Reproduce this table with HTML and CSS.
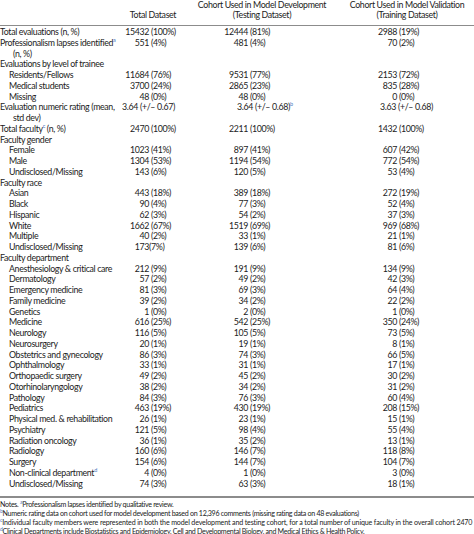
FILE: index.html
```html
<!DOCTYPE html>
<html lang="en">

<head>
    <meta charset="UTF-8">
    <title>Cohort characteristics</title>
    <link rel="stylesheet" href="styles.css">
</head>

<body>
    <table class="stats">
        <colgroup>
            <col class="c-label">
            <col class="c-total">
            <col class="c-dev">
            <col class="c-val">
        </colgroup>
        <thead>
            <tr>
                <th></th>
                <th class="h-total">Total Dataset</th>
                <th>Cohort Used in Model Development<br>(Testing Dataset)</th>
                <th>Cohort Used in Model Validation<br>(Training Dataset)</th>
            </tr>
        </thead>
        <tbody>
            <tr class="first">
                <td class="lb">Total evaluations (n, %)</td>
                <td class="v1"><span class="n">15432</span> (100%)</td>
                <td class="v2"><span class="n">12444</span> (81%)</td>
                <td class="v3"><span class="n">2988</span> (19%)</td>
            </tr>
            <tr>
                <td class="lb">Professionalism lapses identified<sup>a</sup><br>(n, %)</td>
                <td class="v1"><span class="n">551</span> (4%)</td>
                <td class="v2"><span class="n">481</span> (4%)</td>
                <td class="v3"><span class="n">70</span> (2%)</td>
            </tr>
            <tr>
                <td class="lb" colspan="4">Evaluations by level of trainee</td>
            </tr>
            <tr>
                <td class="lb sub">Residents/Fellows</td>
                <td class="v1"><span class="n">11684</span> (76%)</td>
                <td class="v2"><span class="n">9531</span> (77%)</td>
                <td class="v3"><span class="n">2153</span> (72%)</td>
            </tr>
            <tr>
                <td class="lb sub">Medical students</td>
                <td class="v1"><span class="n">3700</span> (24%)</td>
                <td class="v2"><span class="n">2865</span> (23%)</td>
                <td class="v3"><span class="n">835</span> (28%)</td>
            </tr>
            <tr>
                <td class="lb sub">Missing</td>
                <td class="v1"><span class="n">48</span> (0%)</td>
                <td class="v2"><span class="n">48</span> (0%)</td>
                <td class="v3"><span class="n">0</span> (0%)</td>
            </tr>
            <tr>
                <td class="lb">Evaluation numeric rating (mean,<br>std dev)</td>
                <td class="m1">3.64 (+/&#8211; 0.67)</td>
                <td class="m2">3.64 (+/&#8211; 0.68)<sup>b</sup></td>
                <td class="m3">3.63 (+/&#8211; 0.68)</td>
            </tr>
            <tr>
                <td class="lb">Total faculty<sup>c</sup> (n, %)</td>
                <td class="v1"><span class="n">2470</span> (100%)</td>
                <td class="v2"><span class="n">2211</span> (100%)</td>
                <td class="v3"><span class="n">1432</span> (100%)</td>
            </tr>
            <tr>
                <td class="lb" colspan="4">Faculty gender</td>
            </tr>
            <tr>
                <td class="lb sub">Female</td>
                <td class="v1"><span class="n">1023</span> (41%)</td>
                <td class="v2"><span class="n">897</span> (41%)</td>
                <td class="v3"><span class="n">607</span> (42%)</td>
            </tr>
            <tr>
                <td class="lb sub">Male</td>
                <td class="v1"><span class="n">1304</span> (53%)</td>
                <td class="v2"><span class="n">1194</span> (54%)</td>
                <td class="v3"><span class="n">772</span> (54%)</td>
            </tr>
            <tr>
                <td class="lb sub">Undisclosed/Missing</td>
                <td class="v1"><span class="n">143</span> (6%)</td>
                <td class="v2"><span class="n">120</span> (5%)</td>
                <td class="v3"><span class="n">53</span> (4%)</td>
            </tr>
            <tr>
                <td class="lb" colspan="4">Faculty race</td>
            </tr>
            <tr>
                <td class="lb sub">Asian</td>
                <td class="v1"><span class="n">443</span> (18%)</td>
                <td class="v2"><span class="n">389</span> (18%)</td>
                <td class="v3"><span class="n">272</span> (19%)</td>
            </tr>
            <tr>
                <td class="lb sub">Black</td>
                <td class="v1"><span class="n">90</span> (4%)</td>
                <td class="v2"><span class="n">77</span> (3%)</td>
                <td class="v3"><span class="n">52</span> (4%)</td>
            </tr>
            <tr>
                <td class="lb sub">Hispanic</td>
                <td class="v1"><span class="n">62</span> (3%)</td>
                <td class="v2"><span class="n">54</span> (2%)</td>
                <td class="v3"><span class="n">37</span> (3%)</td>
            </tr>
            <tr>
                <td class="lb sub">White</td>
                <td class="v1"><span class="n">1662</span> (67%)</td>
                <td class="v2"><span class="n">1519</span> (69%)</td>
                <td class="v3"><span class="n">969</span> (68%)</td>
            </tr>
            <tr>
                <td class="lb sub">Multiple</td>
                <td class="v1"><span class="n">40</span> (2%)</td>
                <td class="v2"><span class="n">33</span> (1%)</td>
                <td class="v3"><span class="n">21</span> (1%)</td>
            </tr>
            <tr>
                <td class="lb sub">Undisclosed/Missing</td>
                <td class="v1"><span class="n">173</span>(7%)</td>
                <td class="v2"><span class="n">139</span> (6%)</td>
                <td class="v3"><span class="n">81</span> (6%)</td>
            </tr>
            <tr>
                <td class="lb" colspan="4">Faculty department</td>
            </tr>
            <tr>
                <td class="lb sub">Anesthesiology &amp; critical care</td>
                <td class="v1"><span class="n">212</span> (9%)</td>
                <td class="v2"><span class="n">191</span> (9%)</td>
                <td class="v3"><span class="n">134</span> (9%)</td>
            </tr>
            <tr>
                <td class="lb sub">Dermatology</td>
                <td class="v1"><span class="n">57</span> (2%)</td>
                <td class="v2"><span class="n">49</span> (2%)</td>
                <td class="v3"><span class="n">42</span> (3%)</td>
            </tr>
            <tr>
                <td class="lb sub">Emergency medicine</td>
                <td class="v1"><span class="n">81</span> (3%)</td>
                <td class="v2"><span class="n">69</span> (3%)</td>
                <td class="v3"><span class="n">64</span> (4%)</td>
            </tr>
            <tr>
                <td class="lb sub">Family medicine</td>
                <td class="v1"><span class="n">39</span> (2%)</td>
                <td class="v2"><span class="n">34</span> (2%)</td>
                <td class="v3"><span class="n">22</span> (2%)</td>
            </tr>
            <tr>
                <td class="lb sub">Genetics</td>
                <td class="v1"><span class="n">1</span> (0%)</td>
                <td class="v2"><span class="n">2</span> (0%)</td>
                <td class="v3"><span class="n">1</span> (0%)</td>
            </tr>
            <tr>
                <td class="lb sub">Medicine</td>
                <td class="v1"><span class="n">616</span> (25%)</td>
                <td class="v2"><span class="n">542</span> (25%)</td>
                <td class="v3"><span class="n">350</span> (24%)</td>
            </tr>
            <tr>
                <td class="lb sub">Neurology</td>
                <td class="v1"><span class="n">116</span> (5%)</td>
                <td class="v2"><span class="n">105</span> (5%)</td>
                <td class="v3"><span class="n">73</span> (5%)</td>
            </tr>
            <tr>
                <td class="lb sub">Neurosurgery</td>
                <td class="v1"><span class="n">20</span> (1%)</td>
                <td class="v2"><span class="n">19</span> (1%)</td>
                <td class="v3"><span class="n">8</span> (1%)</td>
            </tr>
            <tr>
                <td class="lb sub">Obstetrics and gynecology</td>
                <td class="v1"><span class="n">86</span> (3%)</td>
                <td class="v2"><span class="n">74</span> (3%)</td>
                <td class="v3"><span class="n">66</span> (5%)</td>
            </tr>
            <tr>
                <td class="lb sub">Ophthalmology</td>
                <td class="v1"><span class="n">33</span> (1%)</td>
                <td class="v2"><span class="n">31</span> (1%)</td>
                <td class="v3"><span class="n">17</span> (1%)</td>
            </tr>
            <tr>
                <td class="lb sub">Orthopaedic surgery</td>
                <td class="v1"><span class="n">49</span> (2%)</td>
                <td class="v2"><span class="n">45</span> (2%)</td>
                <td class="v3"><span class="n">30</span> (2%)</td>
            </tr>
            <tr>
                <td class="lb sub">Otorhinolaryngology</td>
                <td class="v1"><span class="n">38</span> (2%)</td>
                <td class="v2"><span class="n">34</span> (2%)</td>
                <td class="v3"><span class="n">31</span> (2%)</td>
            </tr>
            <tr>
                <td class="lb sub">Pathology</td>
                <td class="v1"><span class="n">84</span> (3%)</td>
                <td class="v2"><span class="n">76</span> (3%)</td>
                <td class="v3"><span class="n">60</span> (4%)</td>
            </tr>
            <tr>
                <td class="lb sub">Pediatrics</td>
                <td class="v1"><span class="n">463</span> (19%)</td>
                <td class="v2"><span class="n">430</span> (19%)</td>
                <td class="v3"><span class="n">208</span> (15%)</td>
            </tr>
            <tr>
                <td class="lb sub">Physical med. &amp; rehabilitation</td>
                <td class="v1"><span class="n">26</span> (1%)</td>
                <td class="v2"><span class="n">23</span> (1%)</td>
                <td class="v3"><span class="n">15</span> (1%)</td>
            </tr>
            <tr>
                <td class="lb sub">Psychiatry</td>
                <td class="v1"><span class="n">121</span> (5%)</td>
                <td class="v2"><span class="n">98</span> (4%)</td>
                <td class="v3"><span class="n">55</span> (4%)</td>
            </tr>
            <tr>
                <td class="lb sub">Radiation oncology</td>
                <td class="v1"><span class="n">36</span> (1%)</td>
                <td class="v2"><span class="n">35</span> (2%)</td>
                <td class="v3"><span class="n">13</span> (1%)</td>
            </tr>
            <tr>
                <td class="lb sub">Radiology</td>
                <td class="v1"><span class="n">160</span> (6%)</td>
                <td class="v2"><span class="n">146</span> (7%)</td>
                <td class="v3"><span class="n">118</span> (8%)</td>
            </tr>
            <tr>
                <td class="lb sub">Surgery</td>
                <td class="v1"><span class="n">154</span> (6%)</td>
                <td class="v2"><span class="n">144</span> (7%)</td>
                <td class="v3"><span class="n">104</span> (7%)</td>
            </tr>
            <tr>
                <td class="lb sub">Non-clinical department<sup>d</sup></td>
                <td class="v1"><span class="n">4</span> (0%)</td>
                <td class="v2"><span class="n">1</span> (0%)</td>
                <td class="v3"><span class="n">3</span> (0%)</td>
            </tr>
            <tr class="last">
                <td class="lb sub">Undisclosed/Missing</td>
                <td class="v1"><span class="n">74</span> (3%)</td>
                <td class="v2"><span class="n">63</span> (3%)</td>
                <td class="v3"><span class="n">18</span> (1%)</td>
            </tr>
        </tbody>
    </table>

    <div class="notes">
        <p>Notes. <sup>a</sup>Professionalism lapses identified by qualitative review.</p>
        <p><sup>b</sup>Numeric rating data on cohort used for model development based on 12,396 comments (missing rating data on 48 evaluations)</p>
        <p class="long"><sup>c</sup>Individual faculty members were represented in both the model development and testing cohort, for a total number of unique faculty in the overall cohort 2470</p>
        <p><sup>d</sup>Clinical Departments include Biostatistics and Epidemiology, Cell and Developmental Biology, and Medical Ethics &amp; Health Policy.</p>
    </div>
</body>

</html>
```

FILE: styles.css
```css
* {
    margin: 0;
    padding: 0;
}

body {
    width: 474px;
    overflow: hidden;
    background: #fff;
    color: #222;
    font-family: Lato, "Open Sans", sans-serif;
    font-size: 8.8px;
    letter-spacing: -0.35px;
}

.stats {
    width: 474px;
    table-layout: fixed;
    border-collapse: collapse;
}

.c-label {
    width: 122px;
}

.c-total {
    width: 62px;
}

.c-dev {
    width: 156px;
}

.c-val {
    width: 134px;
}

th {
    font-weight: normal;
    line-height: 10px;
    padding-bottom: 5px;
    text-align: center;
    vertical-align: bottom;
    white-space: nowrap;
    border-bottom: 1px solid #8c8c8c;
}

td {
    line-height: 10.75px;
    vertical-align: top;
    white-space: nowrap;
}

.first td {
    padding-top: 1px;
}

.last td {
    padding-bottom: 7px;
    border-bottom: 2px solid #8c8c8c;
}

.lb {
    padding-left: 13px;
    text-indent: -13px;
}

.lb.sub {
    padding-left: 9px;
    text-indent: 0;
}

.n {
    display: inline-block;
    text-align: right;
    width: 27px;
}

.v2 {
    padding-left: 34px;
}

.v2 .n {
    width: 30px;
}

.v3 {
    padding-left: 27px;
}

.v3 .n {
    width: 30px;
}

.m2 {
    padding-left: 53px;
}

.m3 {
    padding-left: 40px;
}

sup {
    font-size: 5.5px;
    color: #4a78c0;
    vertical-align: 4px;
    line-height: 0;
}

.notes {
    padding-top: 1.5px;
    font-size: 7.1px;
    letter-spacing: -0.3px;
    white-space: nowrap;
}

.notes p {
    line-height: 9px;
}

.notes .long {
    letter-spacing: -0.15px;
}

.notes sup {
    font-size: 5px;
    vertical-align: 3px;
}
```
